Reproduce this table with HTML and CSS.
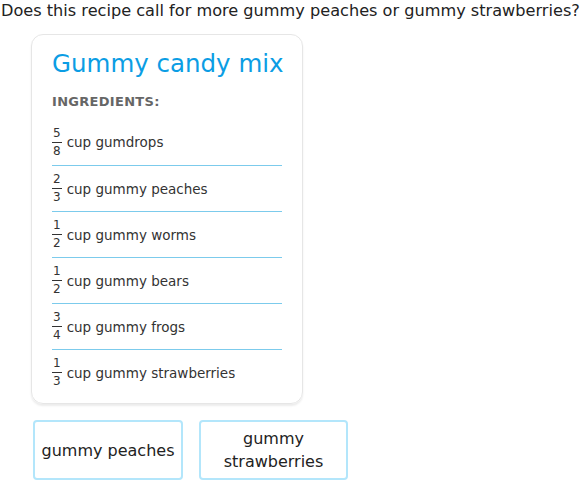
FILE: index.html
```html
<!DOCTYPE html>
<html>
<head>
<meta charset="utf-8">
<link rel="stylesheet" href="styles.css">
</head>
<body>
<div class="question">Does this recipe call for more gummy peaches or gummy strawberries?</div>
<div class="card">
  <div class="title">Gummy candy mix</div>
  <div class="label">INGREDIENTS:</div>
  <ul class="list">
    <li class="row"><span class="frac"><span class="num">5</span><span class="den">8</span></span><span class="item">cup gumdrops</span></li>
    <li class="row"><span class="frac"><span class="num">2</span><span class="den">3</span></span><span class="item">cup gummy peaches</span></li>
    <li class="row"><span class="frac"><span class="num">1</span><span class="den">2</span></span><span class="item">cup gummy worms</span></li>
    <li class="row"><span class="frac"><span class="num">1</span><span class="den">2</span></span><span class="item">cup gummy bears</span></li>
    <li class="row"><span class="frac"><span class="num">3</span><span class="den">4</span></span><span class="item">cup gummy frogs</span></li>
    <li class="row"><span class="frac"><span class="num">1</span><span class="den">3</span></span><span class="item">cup gummy strawberries</span></li>
  </ul>
</div>
<div class="choices">
  <div class="choice c1">gummy peaches</div>
  <div class="choice c2">gummy strawberries</div>
</div>
</body>
</html>
```
FILE: styles.css
```css
html, body {
  margin: 0;
  padding: 0;
  background: #fff;
}
body {
  font-family: "DejaVu Sans", Verdana, sans-serif;
  color: #222;
}
.question {
  font-size: 16.15px;
  line-height: 20px;
  padding: 1px 0 0 1px;
  white-space: nowrap;
}
.card {
  margin: 13px 0 0 31px;
  width: 230px;
  padding: 13px 20px 8px 20px;
  border: 1px solid #e6e6e6;
  border-radius: 12px;
  box-shadow: 0 2px 2px rgba(0,0,0,0.08);
}
.title {
  font-size: 24.5px;
  line-height: 32px;
  color: #0b9de4;
  white-space: nowrap;
}
.label {
  margin-top: 14px;
  font-size: 13px;
  font-weight: bold;
  color: #666;
  letter-spacing: 0.3px;
}
.list {
  list-style: none;
  margin: 10px 0 0 0;
  padding: 0;
}
.row {
  display: flex;
  align-items: center;
  height: 45px;
  border-bottom: 1px solid #7ccbec;
}
.row:first-child {
  height: 46px;
}
.row:last-child {
  border-bottom: none;
}
.frac {
  display: inline-flex;
  flex-direction: column;
  align-items: center;
  font-size: 12px;
  line-height: 13px;
  color: #333;
  margin-right: 5px;
}
.num {
  border-bottom: 1px solid #333;
  padding: 0 1px 2px;
}
.den {
  padding-top: 2px;
}
.item {
  font-size: 13.5px;
  color: #333;
}
.choices {
  display: flex;
  gap: 16px;
  margin: 16px 0 0 33px;
}
.choice {
  box-sizing: border-box;
  height: 60px;
  border: 2px solid #b3e6fb;
  border-radius: 4px;
  display: flex;
  align-items: center;
  justify-content: center;
  text-align: center;
  font-size: 16px;
  line-height: 23px;
  color: #222;
}
.c1 { width: 150px; }
.c2 { width: 149px; padding: 0 20px; }
```
